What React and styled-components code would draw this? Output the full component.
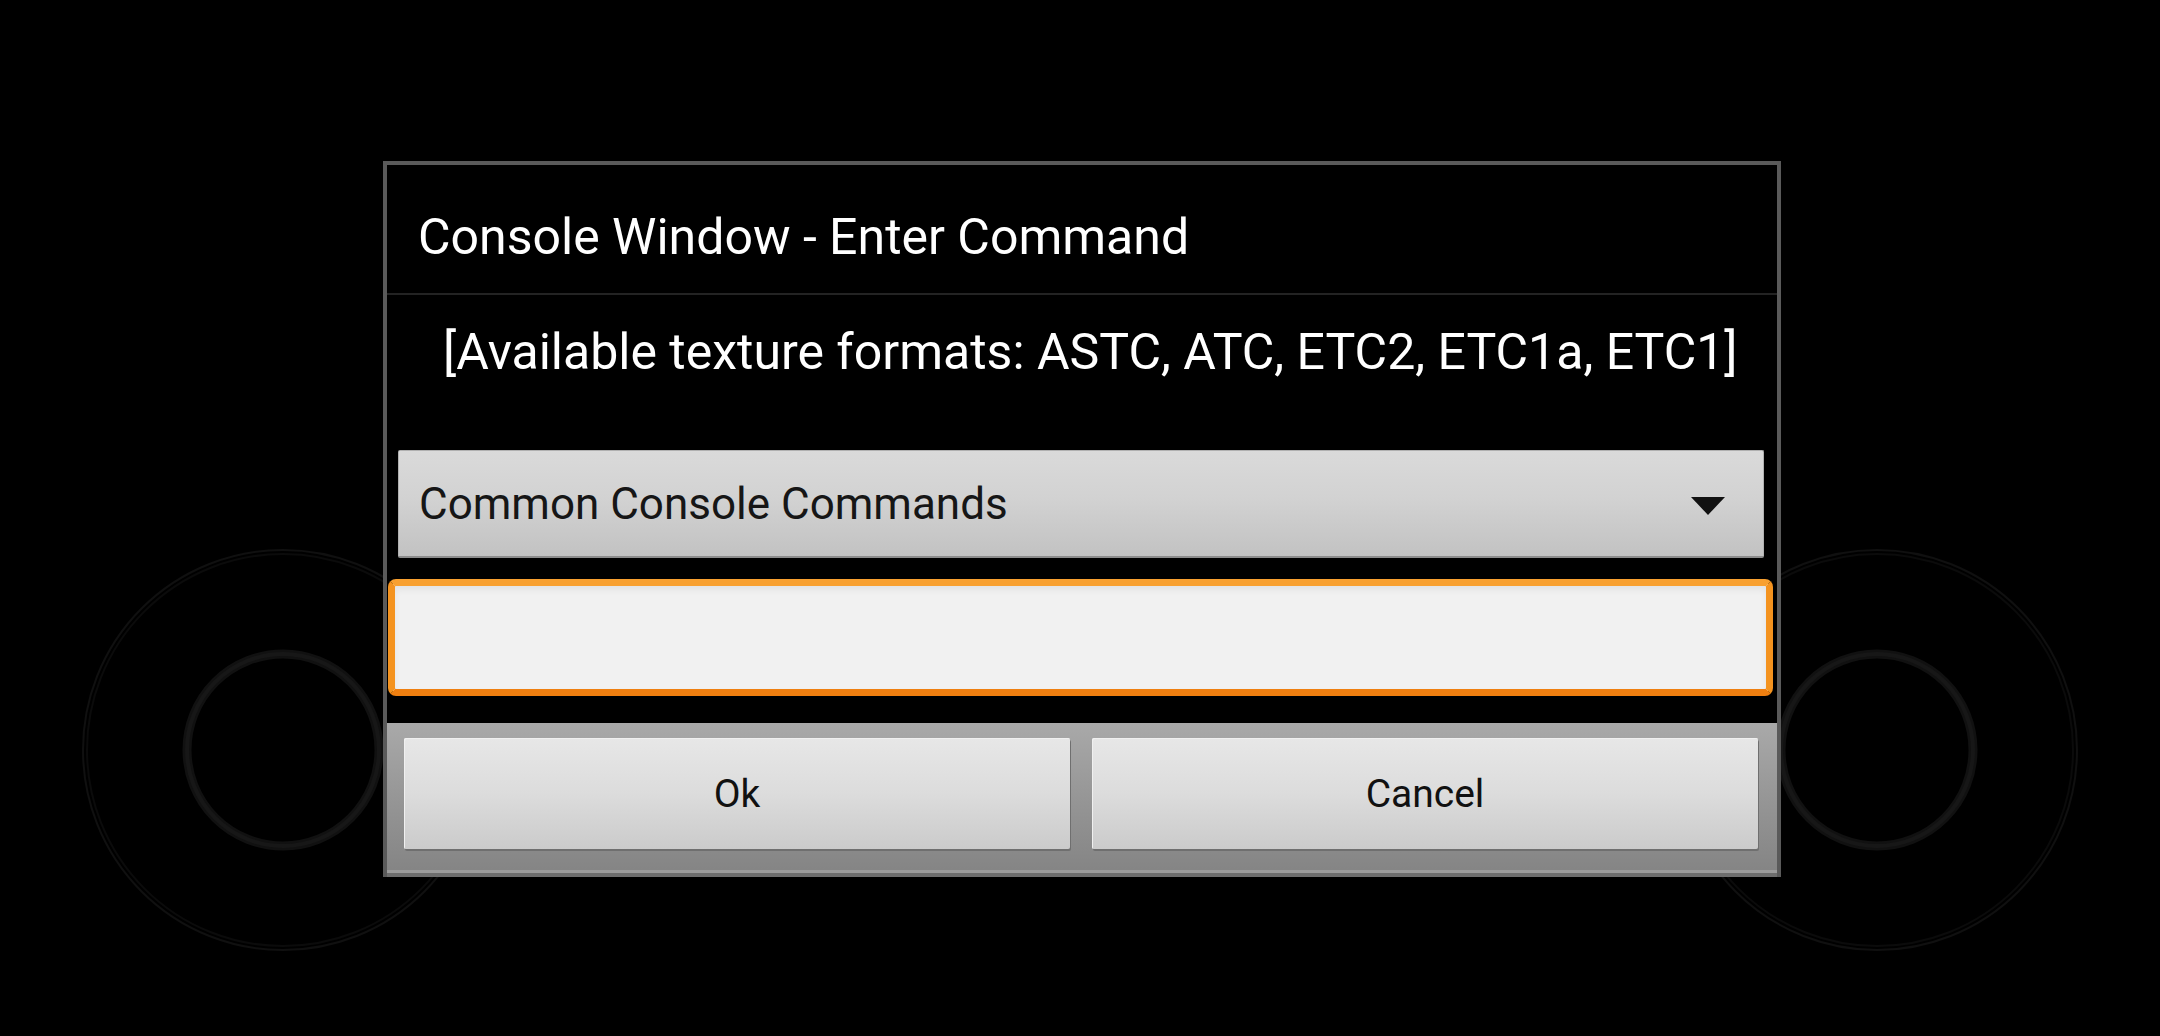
import React from 'react';
import styled, { createGlobalStyle } from 'styled-components';

const GlobalStyle = createGlobalStyle`
  html, body {
    margin: 0;
    padding: 0;
    background: #000;
  }
  body {
    font-family: Roboto, "Noto Sans", "Liberation Sans", sans-serif;
  }
`;

const Joystick = ({ side }) => {
  return (
    <Stick side={side} width="420" height="420" viewBox="0 0 420 420">
      <circle cx="210" cy="210" r="200" fill="none" stroke="#101010" strokeWidth="2" />
      <circle cx="210" cy="210" r="196" fill="none" stroke="#0b0b0b" strokeWidth="2" />
      <circle cx="210" cy="210" r="96" fill="none" stroke="#111" strokeWidth="9" />
      <circle cx="210" cy="210" r="96" fill="none" stroke="#171717" strokeWidth="4" />
    </Stick>
  );
};

const App = () => {
  return (
    <Page>
      <GlobalStyle />
      <Joystick side="left" />
      <Joystick side="right" />
      <Dialog>
        <Title>Console Window - Enter Command</Title>
        <Message>[Available texture formats: ASTC, ATC, ETC2, ETC1a, ETC1]</Message>
        <Spinner>
          <SpinnerLabel>Common Console Commands</SpinnerLabel>
          <Arrow />
        </Spinner>
        <Input type="text" />
        <ButtonBar>
          <Button>Ok</Button>
          <Button>Cancel</Button>
        </ButtonBar>
      </Dialog>
    </Page>
  );
};

export default App;

const Page = styled.div`
  position: relative;
  width: 2160px;
  height: 1036px;
  padding-top: 161px;
  box-sizing: border-box;
  background: #000;
  overflow: hidden;
`;

const Stick = styled.svg`
  position: absolute;
  top: 540px;
  left: ${(p) => (p.side === 'left' ? '73px' : '1667px')};
`;

const Dialog = styled.div`
  position: relative;
  width: 1398px;
  margin: 0 auto 0 383px;
  box-sizing: border-box;
  border: 4px solid #5a5a5a;
  border-bottom: none;
  background: #000;
  display: flex;
  flex-direction: column;
`;

const Title = styled.div`
  height: 130px;
  box-sizing: border-box;
  padding: 42px 0 0 31px;
  font-size: 50px;
  line-height: 60px;
  color: #fff;
  border-bottom: 2px solid #232323;
`;

const Message = styled.div`
  height: 155px;
  box-sizing: border-box;
  padding: 27px 0 0 56px;
  font-size: 50px;
  line-height: 60px;
  color: #fff;
`;

const Spinner = styled.div`
  height: 108px;
  margin: 0 13px 0 11px;
  box-sizing: border-box;
  display: flex;
  align-items: center;
  justify-content: space-between;
  padding: 0 38px 0 20px;
  background: linear-gradient(to bottom, #dadada 0%, #d2d2d2 45%, #c2c2c2 100%);
  border: 1px solid #b0b0b0;
  border-bottom: 2px solid #8c8c8c;
  border-radius: 2px;
`;

const SpinnerLabel = styled.span`
  font-size: 44px;
  color: #161616;
`;

const Arrow = styled.span`
  width: 0;
  height: 0;
  margin-top: 4px;
  border-left: 17px solid transparent;
  border-right: 17px solid transparent;
  border-top: 18px solid #111;
`;

const Input = styled.input`
  display: block;
  height: 117px;
  margin: 21px 4px 0 1px;
  box-sizing: border-box;
  border: 7px solid #f4931f;
  border-top-color: #f8a030;
  border-bottom-color: #ef7f10;
  border-radius: 8px;
  background: #f1f1f1;
  box-shadow: inset 0 4px 6px rgba(0, 0, 0, 0.06);
  outline: none;
  font-family: inherit;
  font-size: 44px;
`;

const ButtonBar = styled.div`
  margin-top: 27px;
  height: 154px;
  box-sizing: border-box;
  padding: 15px 19px 0 17px;
  display: grid;
  grid-template-columns: 1fr 1fr;
  grid-template-rows: 111px;
  column-gap: 22px;
  background: linear-gradient(to bottom, #a9a9a9 0%, #969696 50%, #848484 100%);
  border-bottom: 4px solid #6e6e6e;
  box-shadow: inset 0 -3px 0 #9c9c9c;
`;

const Button = styled.button`
  border: none;
  border-radius: 2px;
  background: linear-gradient(to bottom, #e7e7e7 0%, #dcdcdc 50%, #cbcbcb 100%);
  box-shadow: 1px 2px 0 #6f6f6f, inset 1px 1px 0 #f0f0f0;
  font-family: inherit;
  font-size: 39px;
  color: #111;
  cursor: pointer;
`;
